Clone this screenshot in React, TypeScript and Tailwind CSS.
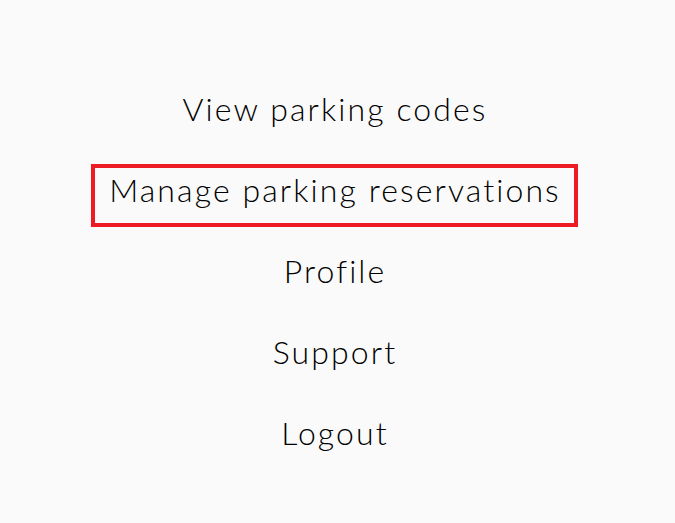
export default function App() {
  const items = [
    { label: "View parking codes", active: false },
    { label: "Manage parking reservations", active: true },
    { label: "Profile", active: false },
    { label: "Support", active: false },
    { label: "Logout", active: false },
  ];
  return (
    <div
      className="min-h-[523px] w-full bg-[#fafafa] text-[#000000]"
      style={{ fontFamily: "Lato, 'Noto Sans', sans-serif" }}
    >
      <nav className="flex w-[668px] flex-col items-center gap-[18px] pt-[83px]">
        {items.map((it) => (
          <a
            key={it.label}
            href="#"
            className={
              it.active
                ? "flex h-[63px] w-[487px] items-center justify-center whitespace-nowrap border-[4px] border-[#ed1c24] pb-[12px] pl-[2px] text-[32px] font-light leading-none tracking-[2.1px]"
                : "flex h-[63px] items-center justify-center whitespace-nowrap border-[4px] border-transparent px-4 pb-[12px] pl-[18px] text-[32px] font-light leading-none tracking-[2.1px]"
            }
          >
            {it.label}
          </a>
        ))}
      </nav>
    </div>
  );
}
